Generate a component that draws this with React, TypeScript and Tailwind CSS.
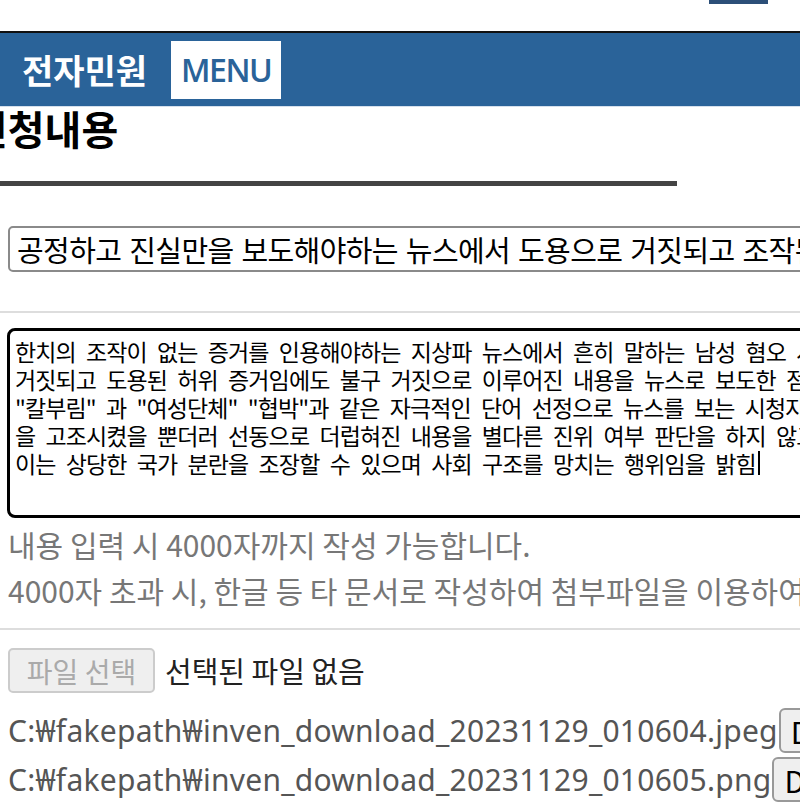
// 전자민원 - 신청내용 (mobile form, cropped)

const textareaLines = [
  "한치의 조작이 없는 증거를 인용해야하는 지상파 뉴스에서 흔히 말하는 남성 혐오 사건을",
  "거짓되고 도용된 허위 증거임에도 불구 거짓으로 이루어진 내용을 뉴스로 보도한 점",
  "\"칼부림\" 과 \"여성단체\" \"협박\"과 같은 자극적인 단어 선정으로 뉴스를 보는 시청자들의 분노",
  "을 고조시켰을 뿐더러 선동으로 더럽혀진 내용을 별다른 진위 여부 판단을 하지 않고",
];

const attachedFiles = [
  "C:₩fakepath₩inven_download_20231129_010604.jpeg",
  "C:₩fakepath₩inven_download_20231129_010605.png",
];

export default function App() {
  return (
    <div className="w-[800px] h-[803px] overflow-hidden bg-white text-black font-['Noto_Sans_CJK_KR','Noto_Sans',sans-serif]">
      {/* top strip */}
      <div className="h-[31px] flex justify-end pr-[32px]">
        <div className="w-[59px] h-[4px] bg-[#2c4f78]" />
      </div>

      {/* header band */}
      <header className="h-[76px] border-t-2 border-t-[#111] border-b border-b-[#d5e0ec] bg-[#2a6399] flex items-center pl-[22px] gap-[24px]">
        <span className="text-white text-[34px] font-bold leading-none">전자민원</span>
        <div className="w-[110px] h-[58px] bg-white flex items-center justify-center">
          <span className="font-['Open_Sans',sans-serif] text-[32px] font-semibold tracking-[-1.5px] text-[#2a6399] leading-none">MENU</span>
        </div>
      </header>

      {/* section title */}
      <h1 className="h-[42px] leading-[42px] text-[40px] font-bold ml-[-29px] whitespace-nowrap">
        신청내용
      </h1>
      <div className="mt-[32px] h-[5px] w-[677px] bg-[#444]" />

      {/* title input */}
      <div className="mt-[40px] ml-[8px] w-[900px] h-[46px] border-2 border-[#8a8a8a] rounded-[5px] pl-[7px] flex items-center whitespace-nowrap overflow-hidden">
        <span className="text-[29px] tracking-[-0.6px] [word-spacing:2px] leading-none">
          공정하고 진실만을 보도해야하는 뉴스에서 도용으로 거짓되고 조작된 내용을
        </span>
      </div>

      <div className="mt-[39px] h-[2px] bg-[#dddddd]" />

      {/* content textarea */}
      <div className="mt-[15px] ml-[7px] w-[900px] h-[190px] border-[3px] border-black rounded-[8px] pt-[6px] pl-[5px] overflow-hidden">
        {textareaLines.map((line, i) => (
          <div key={i} className="h-[28px] leading-[28px] text-[23px] tracking-[-0.9px] [word-spacing:6px] whitespace-nowrap">
            {line}
          </div>
        ))}
        <div className="h-[28px] leading-[28px] text-[23px] tracking-[-0.9px] [word-spacing:6px] whitespace-nowrap flex items-center">
          <span>이는 상당한 국가 분란을 조장할 수 있으며 사회 구조를 망치는 행위임을 밝힘</span>
          <span className="ml-[2px] w-[2px] h-[24px] bg-black" />
        </div>
      </div>

      {/* hint */}
      <div className="mt-[3px] ml-[8px] text-[30px] leading-[46px] text-[#777] whitespace-nowrap">
        <p>내용 입력 시 4000자까지 작성 가능합니다.</p>
        <p>4000자 초과 시, 한글 등 타 문서로 작성하여 첨부파일을 이용하여 주시기 바랍니다.</p>
      </div>

      <div className="mt-[15px] h-[2px] bg-[#dddddd]" />

      {/* file input */}
      <div className="mt-[18px] ml-[8px] flex items-center gap-[10px] whitespace-nowrap">
        <button className="w-[147px] h-[45px] border-2 border-[#cccccc] rounded-[5px] bg-[#efefef] text-[#aaaaaa] text-[28px] leading-none">
          파일 선택
        </button>
        <span className="text-[29px] text-[#222] leading-none">선택된 파일 없음</span>
      </div>

      {/* attached list */}
      <div className="mt-[15px] ml-[8px] flex flex-col gap-[4px]">
        {attachedFiles.map((f) => (
          <div key={f} className="h-[45px] flex items-center whitespace-nowrap">
            <span className="font-['Noto_Sans','Noto_Sans_CJK_KR',sans-serif] text-[30px] text-[#555] tracking-[0.25px] leading-none">
              {f}
            </span>
            <button className="h-[45px] ml-[1px] px-[10px] border-2 border-[#999] rounded-[6px] bg-[#efefef] text-[30px] text-black leading-none">
              Delete
            </button>
          </div>
        ))}
      </div>
    </div>
  );
}
